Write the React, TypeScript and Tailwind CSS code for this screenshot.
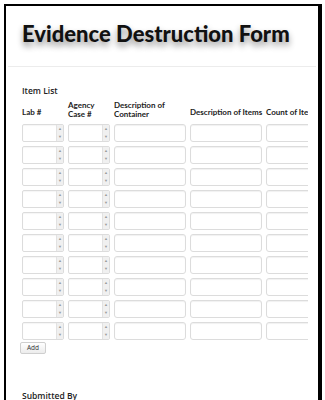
import React from "react";

const ROWS = Array.from({ length: 10 }, (_, i) => i);

function Spinner() {
  return (
    <div className="flex flex-col items-center justify-center w-[7px] h-full bg-[#f0f0f0] border-l border-[#e2e2e2] text-[#9a9a9a] leading-none">
      <span className="text-[4px] h-1/2 flex items-center">▲</span>
      <span className="text-[4px] h-1/2 flex items-center">▼</span>
    </div>
  );
}

function NumberBox() {
  return (
    <div className="w-[42px] h-[18px] shrink-0 flex justify-end border border-[#dcdcdc] rounded-[2px] bg-white shadow-[inset_0_1px_1px_rgba(0,0,0,0.04)]">
      <Spinner />
    </div>
  );
}

function TextBox() {
  return (
    <div className="w-[72px] h-[18px] shrink-0 border border-[#dcdcdc] rounded-[3px] bg-white shadow-[inset_0_1px_1px_rgba(0,0,0,0.06)]" />
  );
}

export default function App() {
  return (
    <div className="bg-white w-[325px] h-[400px] overflow-hidden font-['Lato',sans-serif]">
      <div className="ml-[4px] mt-[4px] w-[318px] h-[420px] border-t-2 border-l-2 border-r-4 border-black">
        {/* Title */}
        <div className="pl-[14px] pt-[13px] pb-[17px] border-b border-[#ececec] mx-[2px]">
          <h1 className="text-[22px] leading-[30px] font-black text-[#111] [text-shadow:0_4px_6px_rgba(0,0,0,0.45)]">
            Evidence Destruction Form
          </h1>
        </div>

        {/* Item list */}
        <div className="pl-[16px] pt-[18px]">
          <p className="text-[8.5px] leading-[12px] font-semibold text-[#222] font-['Open_Sans',sans-serif]">Item List</p>

          <div className="w-[286px] overflow-hidden mt-[4px]">
            <div className="flex gap-[4px] items-end h-[18px] text-[8px] leading-[9px] font-bold text-[#222]">
              <div className="w-[42px] shrink-0 pb-[2px]">Lab #</div>
              <div className="w-[42px] shrink-0">Agency<br />Case #</div>
              <div className="w-[72px] shrink-0">Description of<br />Container</div>
              <div className="w-[72px] shrink-0 pb-[2px] whitespace-nowrap">Description of Items</div>
              <div className="w-[72px] shrink-0 pb-[2px] whitespace-nowrap">Count of Items</div>
            </div>

            <div className="mt-[5px] flex flex-col gap-[4px]">
              {ROWS.map(r => (
                <div key={r} className="flex gap-[4px]">
                  <NumberBox />
                  <NumberBox />
                  <TextBox />
                  <TextBox />
                  <TextBox />
                </div>
              ))}
            </div>
          </div>

          <button className="-ml-[2px] mt-[2px] h-[12px] w-[26px] flex items-center justify-center border border-[#cfcfcf] rounded-[2px] bg-gradient-to-b from-white to-[#ececec] text-[6.5px] text-[#333] font-['Open_Sans',sans-serif]">
            Add
          </button>

          <p className="mt-[36px] text-[8.5px] leading-[12px] font-semibold text-[#222] font-['Open_Sans',sans-serif]">Submitted By</p>
        </div>
      </div>
    </div>
  );
}
